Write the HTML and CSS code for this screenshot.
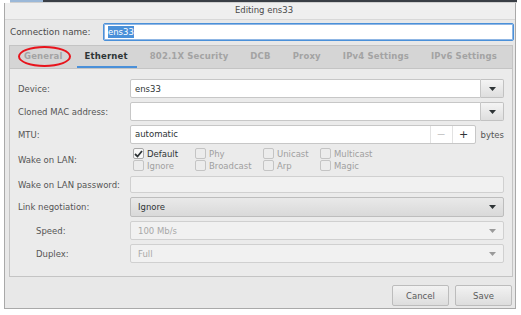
FILE: index.html
```html
<!DOCTYPE html>
<html lang="en">
<head>
    <meta charset="UTF-8">
    <title>Editing ens33</title>
    <link rel="stylesheet" href="styles.css">
</head>
<body>
    <div class="desk"></div>
    <div class="dialog">
        <div class="titlebar">Editing ens33</div>
        <div class="conn-row">
            <span class="conn-label">Connection name:</span>
            <div class="entry focused"><span class="selected">ens33</span></div>
        </div>

        <div class="notebook">
            <div class="tabs">
                <div class="tab">General<span class="circle"></span></div>
                <div class="tab active">Ethernet</div>
                <div class="tab">802.1X Security</div>
                <div class="tab">DCB</div>
                <div class="tab">Proxy</div>
                <div class="tab">IPv4 Settings</div>
                <div class="tab">IPv6 Settings</div>
            </div>

            <div class="page">
                <div class="form">
                    <span class="label">Device:</span>
                    <div class="combo-entry">
                        <div class="entry">ens33</div>
                        <div class="drop"><svg width="7" height="4" viewBox="0 0 7 4"><path d="M0 0h7L3.5 4z" fill="#2e3436"/></svg></div>
                    </div>

                    <span class="label">Cloned MAC address:</span>
                    <div class="combo-entry">
                        <div class="entry"></div>
                        <div class="drop"><svg width="7" height="4" viewBox="0 0 7 4"><path d="M0 0h7L3.5 4z" fill="#2e3436"/></svg></div>
                    </div>

                    <span class="label">MTU:</span>
                    <div class="mtu">
                        <div class="spin">
                            <div class="spin-text">automatic</div>
                            <div class="spin-btn minus">&minus;</div>
                            <div class="spin-btn plus">+</div>
                        </div>
                        <span class="unit">bytes</span>
                    </div>

                    <span class="label">Wake on LAN:</span>
                    <div class="checks">
                        <label class="check on"><span class="box"><svg width="9" height="8" viewBox="0 0 9 8"><path d="M1 4l2.5 2.5L8 1" fill="none" stroke="#2e3436" stroke-width="1.8"/></svg></span>Default</label>
                        <label class="check"><span class="box"></span>Phy</label>
                        <label class="check"><span class="box"></span>Unicast</label>
                        <label class="check"><span class="box"></span>Multicast</label>
                        <label class="check"><span class="box"></span>Ignore</label>
                        <label class="check"><span class="box"></span>Broadcast</label>
                        <label class="check"><span class="box"></span>Arp</label>
                        <label class="check"><span class="box"></span>Magic</label>
                    </div>

                    <span class="label">Wake on LAN password:</span>
                    <div class="entry disabled"></div>

                    <span class="label">Link negotiation:</span>
                    <div class="combo">
                        <span>Ignore</span>
                        <svg width="7" height="4" viewBox="0 0 7 4"><path d="M0 0h7L3.5 4z" fill="#2e3436"/></svg>
                    </div>

                    <span class="label sub">Speed:</span>
                    <div class="combo disabled">
                        <span>100 Mb/s</span>
                        <svg width="7" height="4" viewBox="0 0 7 4"><path d="M0 0h7L3.5 4z" fill="#9a9a9a"/></svg>
                    </div>

                    <span class="label sub">Duplex:</span>
                    <div class="combo disabled">
                        <span>Full</span>
                        <svg width="7" height="4" viewBox="0 0 7 4"><path d="M0 0h7L3.5 4z" fill="#9a9a9a"/></svg>
                    </div>
                </div>
            </div>
        </div>

        <div class="actions">
            <button class="btn">Cancel</button>
            <button class="btn">Save</button>
        </div>
    </div>
</body>
</html>
```

FILE: styles.css
```css
body {
    margin: 0;
    background: #fff;
    font-family: "DejaVu Sans", sans-serif;
    font-size: 8.5px;
    color: #4a4a4a;
}
.desk {
    height: 3px;
    margin-left: 10px;
    width: 507px;
    background: linear-gradient(to right, #9bb8d8 0, #9bb8d8 33px, #3a3f46 33px, #3a3f46 100%);
    border-bottom: 1px solid #d0d0d0;
    box-sizing: border-box;
}
.dialog {
    margin-left: 4px;
    width: 510px;
    height: 305px;
    border: 1px solid #a9a9a9;
    border-top: none;
    background: #e8e8e8;
    display: flex;
    flex-direction: column;
}
.titlebar {
    height: 16px;
    line-height: 15px;
    text-align: center;
    padding-left: 8px;
    color: #4a4a4a;
    background: #efefef;
    border-bottom: 1px solid #d8d8d8;
}
.conn-row {
    display: flex;
    align-items: center;
    gap: 6px;
    margin-top: 3px;
    padding: 0 1px 0 5px;
    height: 18px;
}
.conn-label {
    width: 87px;
    font-size: 8.8px;
}
.entry {
    flex: 1;
    height: 17px;
    line-height: 17px;
    background: #fff;
    border: 1px solid #c7c7c7;
    border-radius: 2px;
    padding: 0 4px;
    color: #2e3436;
    box-sizing: border-box;
}
.entry.focused {
    height: 18px;
    border: 1px solid #4a90d9;
    box-shadow: inset 0 0 0 1px #8fb6e4;
}
.selected {
    background: #4a90d9;
    color: #fff;
    padding: 1px 0;
}
.entry.disabled {
    background: #f1f1f1;
    border-color: #d0d0d0;
}
.notebook {
    margin: 4px 2px 0 4px;
}
.tabs {
    display: flex;
    gap: 4px;
    height: 22px;
    padding-left: 5px;
    background: #d5d5d5;
    border: 1px solid #c4c4c4;
    border-bottom: none;
}
.tab {
    position: relative;
    padding: 0 9px;
    line-height: 21px;
    font-weight: bold;
    color: #a3a3a3;
    letter-spacing: 0.17px;
}
.tab.active {
    color: #2e3436;
    border-bottom: 2px solid #4a90d9;
    margin-left: 1px;
    padding: 0 9px 0 8px;
}
.circle {
    position: absolute;
    left: 3px;
    top: 0;
    width: 49px;
    height: 17px;
    border: 2px solid #e8141c;
    border-radius: 50%;
}
.page {
    background: #ebebeb;
    border: 1px solid #c4c4c4;
    padding: 10px 8px 13px 8px;
}
.form {
    display: grid;
    grid-template-columns: 112px 1fr;
    row-gap: 4px;
    align-items: center;
}
.label {
    color: #555;
}
.label.sub {
    padding-left: 18px;
}
.combo-entry {
    display: flex;
    height: 19px;
}
.combo-entry .entry {
    height: 19px;
    line-height: 19px;
    border-radius: 2px 0 0 2px;
}
.drop {
    width: 22px;
    border: 1px solid #c2c2c2;
    border-left: none;
    border-radius: 0 2px 2px 0;
    background: linear-gradient(#f4f4f4, #dedede);
    display: flex;
    align-items: center;
    justify-content: center;
}
.mtu {
    display: flex;
    align-items: center;
    gap: 5px;
}
.spin {
    flex: 1;
    display: flex;
    height: 19px;
    background: #fff;
    border: 1px solid #c7c7c7;
    border-radius: 2px;
    box-sizing: border-box;
}
.spin-text {
    flex: 1;
    line-height: 17px;
    padding: 0 4px;
    color: #2e3436;
}
.spin-btn {
    width: 21px;
    border-left: 1px solid #e2e2e2;
    text-align: center;
    line-height: 17px;
    font-size: 11px;
}
.spin-btn.minus {
    color: #c8c8c8;
}
.spin-btn.plus {
    color: #2e3436;
    width: 22px;
}
.unit {
    color: #555;
}
.checks {
    display: grid;
    grid-template-columns: 62px 68px 57px auto;
    row-gap: 1px;
    padding: 0 0 1px 3px;
}
.check {
    display: flex;
    align-items: center;
    gap: 3px;
    height: 11px;
    color: #a0a0a0;
}
.check.on {
    color: #2e3436;
}
.box {
    width: 9px;
    height: 9px;
    border: 1px solid #c4c4c4;
    border-radius: 2px;
    background: #ececec;
    display: flex;
    align-items: center;
    justify-content: center;
}
.check.on .box {
    background: #f8f8f8;
    border-color: #a8a8a8;
}
.combo {
    height: 20px;
    box-sizing: border-box;
    border: 1px solid #bdbdbd;
    border-radius: 2px;
    background: linear-gradient(#e9e9e9, #d9d9d9);
    display: flex;
    align-items: center;
    justify-content: space-between;
    padding: 0 7px 0 7px;
    color: #2e3436;
}
.combo.disabled {
    height: 19px;
    background: #f1f1f1;
    border-color: #d0d0d0;
    color: #a8a8a8;
}
.actions {
    display: flex;
    justify-content: flex-end;
    gap: 6px;
    margin-top: 8px;
    padding-right: 3px;
}
.btn {
    width: 57px;
    height: 21px;
    font-family: inherit;
    font-size: 8.5px;
    color: #5a5a5a;
    border: 1px solid #bcbcbc;
    border-radius: 2px;
    background: linear-gradient(#f2f2f2, #dddddd);
}
```
